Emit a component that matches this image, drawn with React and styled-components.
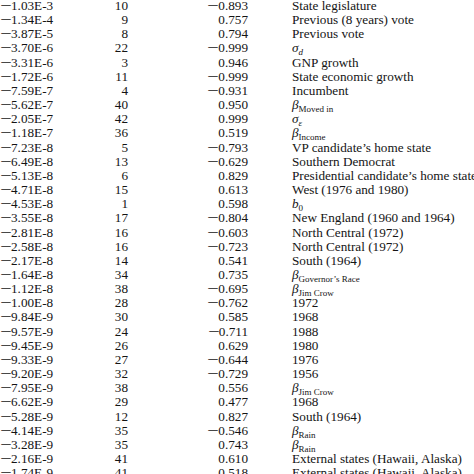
import React from "react";
import styled, { createGlobalStyle } from "styled-components";

const Global = createGlobalStyle`
  html, body {
    margin: 0;
    padding: 0;
    background: #ffffff;
  }
  body {
    font-family: "Liberation Serif", "Times New Roman", serif;
    color: #141414;
    overflow: hidden;
  }
`;

const Table = styled.div`
  margin-top: -1px;
  width: 474px;
  display: grid;
  grid-template-columns: 70px 58px 120px 1fr;
  grid-auto-rows: 14.16px;
  font-size: 13.2px;
  line-height: 14.16px;
  white-space: nowrap;
`;

const Cell = styled.div`
  text-align: ${(p) => (p.$right ? "right" : "left")};
  padding-left: ${(p) => (p.$label ? "44px" : "0")};
`;

const Minus = styled.span`
  display: inline-block;
  width: 11px;
  text-align: left;
  transform: scaleX(1.55);
  transform-origin: left center;
`;

const Sym = styled.i`
  font-style: italic;
`;

const Sub = styled.sub`
  font-size: 9px;
  line-height: 0;
  vertical-align: -3px;
  font-style: ${(p) => (p.$italic ? "italic" : "normal")};
`;

const sym = (s, sub, italicSub) => (
  <>
    <Sym>{s}</Sym>
    <Sub $italic={italicSub}>{sub}</Sub>
  </>
);

const num = (v) =>
  v.startsWith("-") ? (
    <>
      <Minus>−</Minus>
      {v.slice(1)}
    </>
  ) : (
    v
  );

const rows = [
  ["-1.03E-3", "10", "-0.893", "State legislature"],
  ["-1.34E-4", "9", "0.757", "Previous (8 years) vote"],
  ["-3.87E-5", "8", "0.794", "Previous vote"],
  ["-3.70E-6", "22", "-0.999", sym("σ", "d", true)],
  ["-3.31E-6", "3", "0.946", "GNP growth"],
  ["-1.72E-6", "11", "-0.999", "State economic growth"],
  ["-7.59E-7", "4", "-0.931", "Incumbent"],
  ["-5.62E-7", "40", "0.950", sym("β", "Moved in")],
  ["-2.05E-7", "42", "0.999", sym("σ", "ε", true)],
  ["-1.18E-7", "36", "0.519", sym("β", "Income")],
  ["-7.23E-8", "5", "-0.793", "VP candidate’s home state"],
  ["-6.49E-8", "13", "-0.629", "Southern Democrat"],
  ["-5.13E-8", "6", "0.829", "Presidential candidate’s home state"],
  ["-4.71E-8", "15", "0.613", "West (1976 and 1980)"],
  ["-4.53E-8", "1", "0.598", sym("b", "0")],
  ["-3.55E-8", "17", "-0.804", "New England (1960 and 1964)"],
  ["-2.81E-8", "16", "-0.603", "North Central (1972)"],
  ["-2.58E-8", "16", "-0.723", "North Central (1972)"],
  ["-2.17E-8", "14", "0.541", "South (1964)"],
  ["-1.64E-8", "34", "0.735", sym("β", "Governor’s Race")],
  ["-1.12E-8", "38", "-0.695", sym("β", "Jim Crow")],
  ["-1.00E-8", "28", "-0.762", "1972"],
  ["-9.84E-9", "30", "0.585", "1968"],
  ["-9.57E-9", "24", "-0.711", "1988"],
  ["-9.45E-9", "26", "0.629", "1980"],
  ["-9.33E-9", "27", "-0.644", "1976"],
  ["-9.20E-9", "32", "-0.729", "1956"],
  ["-7.95E-9", "38", "0.556", sym("β", "Jim Crow")],
  ["-6.62E-9", "29", "0.477", "1968"],
  ["-5.28E-9", "12", "0.827", "South (1964)"],
  ["-4.14E-9", "35", "-0.546", sym("β", "Rain")],
  ["-3.28E-9", "35", "0.743", sym("β", "Rain")],
  ["-2.16E-9", "41", "0.610", "External states (Hawaii, Alaska)"],
  ["-1.74E-9", "41", "0.518", "External states (Hawaii, Alaska)"],
];

export default function App() {
  return (
    <>
      <Global />
      <Table>
        {rows.map((r, i) => (
          <React.Fragment key={i}>
            <Cell>{num(r[0])}</Cell>
            <Cell $right>{r[1]}</Cell>
            <Cell $right>{num(r[2])}</Cell>
            <Cell $label>{r[3]}</Cell>
          </React.Fragment>
        ))}
      </Table>
    </>
  );
}
